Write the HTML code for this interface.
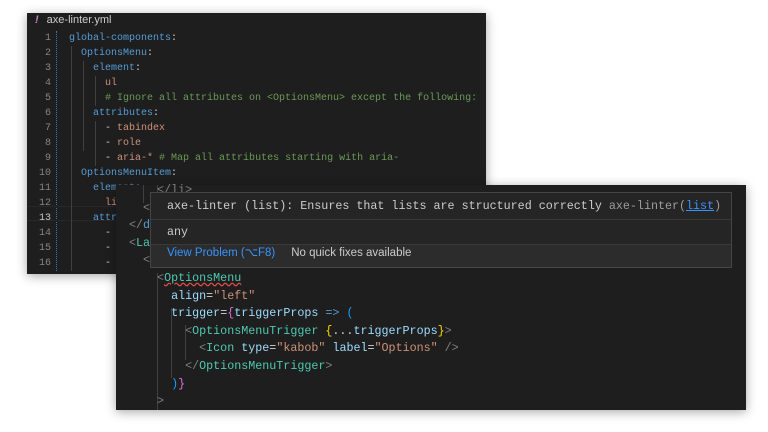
<!DOCTYPE html>
<html><head><meta charset="utf-8"><style>
*{margin:0;padding:0;box-sizing:border-box}
body{width:768px;height:432px;background:#fff;position:relative;overflow:hidden;font-family:"Liberation Mono",monospace}
.win{position:absolute;background:#1e1e1e;box-shadow:0 2px 10px rgba(0,0,0,.35)}
#back{left:27px;top:13px;width:459px;height:261px}
#back .title{height:15px;font:11px "Liberation Sans",sans-serif;color:#ccc;padding-left:8px;line-height:15px;background:#1e1e1e}
#back .title b{color:#c586c0;font-style:italic;margin-right:8px}
.ln{position:absolute;left:0;width:24px;text-align:right;color:#858585;font-size:10px}
.bl{position:absolute;left:42px;font-size:10px;white-space:pre;color:#d4d4d4;line-height:15px}
.k{color:#569cd6}.s{color:#ce9178}.c{color:#6a9955}.w{color:#d4d4d4}
#front{left:116px;top:185px;width:630px;height:225px}
.fl{position:absolute;left:13px;font-size:11.7px;white-space:pre;color:#d4d4d4;line-height:17.6px}
.g{color:#808080}.t{color:#4ec9b0}.a{color:#9cdcfe}.m{color:#da70d6}.y{color:#ffd700}.b{color:#179fff}
.guide{position:absolute;width:1px;background:#404040}
#hover{position:absolute;left:150px;top:192px;width:582px;height:76px;background:#252526;border:1px solid #454545;font-size:11.7px}
#hover .r1{height:27px;line-height:27px;padding-left:16px;color:#ccc;white-space:pre;border-bottom:1px solid #3a3a3a}
#hover .r2{height:25px;line-height:25px;padding-left:16px;color:#ccc;border-bottom:1px solid #3a3a3a}
#hover .r3{height:22px;line-height:22px;padding-left:16px;background:#2c2c2d;font:11.5px "Liberation Sans",sans-serif;color:#ccc}
</style></head><body>
<div id="back" class="win">
<div class="title"><b>!</b>axe-linter.yml</div>
<div style="position:absolute;left:29px;top:18px;width:0;height:240px;border-left:1px dotted #2f7fbf"></div>
<div style="position:absolute;left:0;top:193px;width:459px;height:15px;border-top:1px solid #282828;border-bottom:1px solid #282828"></div>
<div class="ln" style="top:18px;line-height:15px">1<br>2<br>3<br>4<br>5<br>6<br>7<br>8<br>9<br>10<br>11<br>12<br><span style="color:#c6c6c6">13</span><br>14<br>15<br>16</div>
<div class="guide" style="left:44px;top:33px;height:225px"></div>
<div class="guide" style="left:56px;top:48px;height:90px"></div>
<div class="guide" style="left:68px;top:63px;height:30px"></div>
<div class="guide" style="left:68px;top:108px;height:45px"></div>
<div class="bl" style="top:18px"><span class="k">global-components</span>:
  <span class="k">OptionsMenu</span>:
    <span class="k">element</span>:
      <span class="s">ul</span>
      <span class="c"># Ignore all attributes on &lt;OptionsMenu&gt; except the following:</span>
    <span class="k">attributes</span>:
      - <span class="s">tabindex</span>
      - <span class="s">role</span>
      - <span class="s">aria-*</span> <span class="c"># Map all attributes starting with aria-</span>
  <span class="k">OptionsMenuItem</span>:
    <span class="k">element</span>:
      <span class="s">li</span>
    <span class="k">attributes</span>:
      - <span class="s">tabindex</span>
      - <span class="s">role</span>
      - <span class="s">aria-*</span></div>
</div>
<div id="front" class="win">
<div class="guide" style="left:27px;top:0;height:18px"></div>
<div class="guide" style="left:41px;top:0;height:18px"></div>
<div class="guide" style="left:41px;top:88px;height:137px"></div>
<div class="guide" style="left:55px;top:123px;height:70px"></div>
<div class="guide" style="left:69px;top:140px;height:35px"></div>
<div class="fl" style="top:-3px"><span class="g">    &lt;/li&gt;</span>
<span class="g">  &lt;/</span><span class="k">div</span><span class="g">&gt;</span>
<span class="g">&lt;/</span><span class="k">div</span><span class="g">&gt;</span>
<span class="g">&lt;</span><span class="t">Layout</span><span class="g">&gt;</span>
<span class="g">  &lt;</span><span class="t">Main</span><span class="g">&gt;</span>
<span class="g">    &lt;</span><span class="t" style="text-decoration:underline wavy #f14c4c">OptionsMenu</span>
      <span class="a">align</span>=<span class="s">"left"</span>
      <span class="a">trigger</span>=<span class="m">{</span><span class="a">triggerProps</span> <span class="k">=&gt;</span> <span class="b">(</span>
<span class="g">        &lt;</span><span class="t">OptionsMenuTrigger</span> <span class="y">{</span>...<span class="a">triggerProps</span><span class="y">}</span><span class="g">&gt;</span>
<span class="g">          &lt;</span><span class="t">Icon</span> <span class="a">type</span>=<span class="s">"kabob"</span> <span class="a">label</span>=<span class="s">"Options"</span> <span class="g">/&gt;</span>
<span class="g">        &lt;/</span><span class="t">OptionsMenuTrigger</span><span class="g">&gt;</span>
      <span class="b">)</span><span class="m">}</span>
<span class="g">    &gt;</span></div>
</div>
<div id="hover">
<div class="r1">axe-linter (list): Ensures that lists are structured correctly <span style="color:#9d9d9d">axe-linter(<span style="color:#3794ff;text-decoration:underline">list</span>)</span></div>
<div class="r2">any</div>
<div class="r3"><span style="color:#3794ff">View Problem (⌥F8)</span>&nbsp;&nbsp;&nbsp;&nbsp;&nbsp;No quick fixes available</div>
</div>
</body></html>
